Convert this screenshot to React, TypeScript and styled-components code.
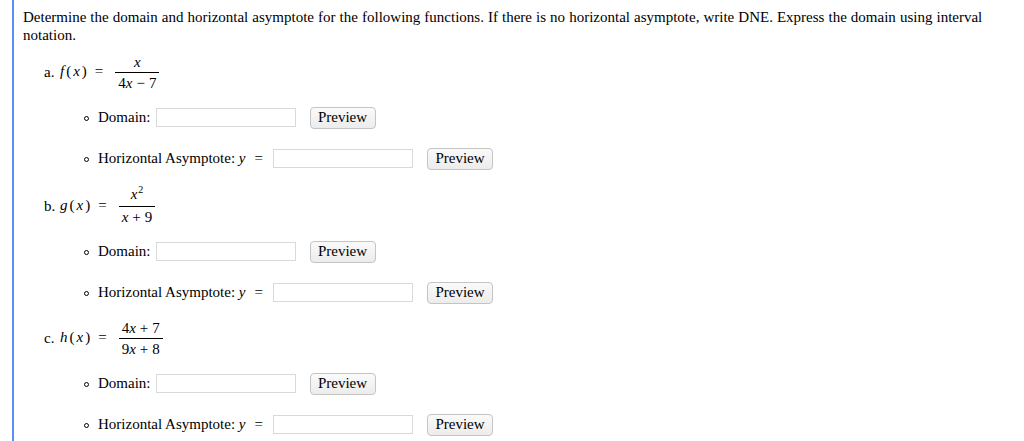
import React from 'react';
import styled, { createGlobalStyle } from 'styled-components';

/* ------------------------------- Global look ------------------------------ */
const serif = `'Liberation Serif', 'Times New Roman', Times, serif`;

const GlobalStyle = createGlobalStyle`
  html, body {
    margin: 0;
    padding: 0;
    background: #fff;
  }
  body {
    font-family: ${serif};
    font-size: 15px;
    color: #000;
  }
`;

/* --------------------------------- Styles --------------------------------- */
const Page = styled.div`
  margin-left: 12px;
  border-left: 2px solid #5a8ef2;
  min-height: 100vh;
  padding: 8px 30px 0 9px;
  box-sizing: border-box;
`;

const Intro = styled.p`
  margin: 0;
  line-height: 18px;
  max-width: 970px;
  word-spacing: 0.3px;
`;

const ProblemList = styled.div`
  display: flex;
  flex-direction: column;
  padding-left: 21px;
  margin-top: 8px;
`;

const ProblemItem = styled.div`
  display: flex;
  flex-direction: column;
  & + & {
    margin-top: 17px;
  }
  &:last-child {
    margin-top: 15px;
  }
`;

const EqRow = styled.div`
  display: flex;
  align-items: center;
  height: 41px;
`;

const Letter = styled.span`
  width: 16px;
  flex: none;
`;

const MathLine = styled.span`
  display: block;
  white-space: nowrap;
  line-height: 41px;
  font-family: ${serif};
`;

const Var = styled.span`
  font-family: ${serif};
  font-style: italic;
`;

const Paren = styled.span`
  padding: 0 2px;
`;

const Op = styled.span`
  padding: 0 4px;
`;

const Sup = styled.span`
  font-size: 10px;
  position: relative;
  top: -6px;
  margin-left: 1px;
`;

const Equals = styled.span<{ $trail?: boolean }>`
  display: inline-block;
  padding: ${(p) => (p.$trail ? '0 0 0 9px' : '0 6px')};
  margin-right: ${(p) => (p.$trail ? '5px' : '0')};
`;

const Fraction = styled.span`
  display: inline-block;
  vertical-align: middle;
  text-align: center;
  line-height: 20px;
  margin-left: 6px;
  position: relative;
  top: -1px;
`;

const Num = styled.span`
  display: block;
  padding: 0 3px;
  border-bottom: 1px solid #000;
`;

const Den = styled.span`
  display: block;
  padding: 0 3px;
`;

const SubList = styled.div`
  display: flex;
  flex-direction: column;
  gap: 20px;
  margin-top: 14px;
  padding-left: 40px;
`;

const SubRow = styled.div`
  display: flex;
  align-items: center;
  height: 21px;
`;

const Bullet = styled.span`
  width: 3px;
  height: 3px;
  border: 1px solid #000;
  border-radius: 50%;
  margin-right: 9px;
  margin-top: 1px;
  flex: none;
`;

const RowLabel = styled.span`
  white-space: pre;
  margin-right: 5px;
`;

const AnswerInput = styled.input`
  width: 140px;
  height: 19px;
  box-sizing: border-box;
  border: 1px solid #d9d9d9;
  background: #fff;
  padding: 0 3px;
  font: inherit;
  outline: none;
`;

const PreviewButton = styled.button`
  margin-left: 14px;
  width: 66px;
  height: 22px;
  box-sizing: border-box;
  border: 1px solid #c4c4c4;
  border-radius: 4px;
  background: linear-gradient(#fafafa, #ececec);
  font-family: ${serif};
  font-size: 15px;
  color: #000;
  padding: 0;
`;

/* ---------------------------------- Data ---------------------------------- */
type Problem = {
  letter: string;
  fn: string;
  num: React.ReactNode;
  den: React.ReactNode;
};

const X = () => <Var>x</Var>;

const problems: Problem[] = [
  {
    letter: 'a.',
    fn: 'f',
    num: <X />,
    den: (
      <>
        4<X />
        <Op>−</Op>7
      </>
    ),
  },
  {
    letter: 'b.',
    fn: 'g',
    num: (
      <>
        <X />
        <Sup>2</Sup>
      </>
    ),
    den: (
      <>
        <X />
        <Op>+</Op>9
      </>
    ),
  },
  {
    letter: 'c.',
    fn: 'h',
    num: (
      <>
        4<X />
        <Op>+</Op>7
      </>
    ),
    den: (
      <>
        9<X />
        <Op>+</Op>8
      </>
    ),
  },
];

/* -------------------------------- Component ------------------------------- */
const App = () => {
  return (
    <Page>
      <GlobalStyle />
      <Intro>
        Determine the domain and horizontal asymptote for the following
        functions. If there is no horizontal asymptote, write DNE. Express the
        domain using interval notation.
      </Intro>

      <ProblemList>
        {problems.map((p) => (
          <ProblemItem key={p.letter}>
            <EqRow>
              <Letter>{p.letter}</Letter>
              <MathLine>
                <Var>{p.fn}</Var>
                <Paren>(</Paren>
                <X />
                <Paren>)</Paren>
                <Equals>=</Equals>
                <Fraction>
                  <Num>{p.num}</Num>
                  <Den>{p.den}</Den>
                </Fraction>
              </MathLine>
            </EqRow>

            <SubList>
              <SubRow>
                <Bullet />
                <RowLabel>Domain:</RowLabel>
                <AnswerInput type="text" />
                <PreviewButton type="button">Preview</PreviewButton>
              </SubRow>
              <SubRow>
                <Bullet />
                <RowLabel>
                  Horizontal Asymptote: <Var>y</Var>
                  <Equals $trail>=</Equals>
                </RowLabel>
                <AnswerInput type="text" />
                <PreviewButton type="button">Preview</PreviewButton>
              </SubRow>
            </SubList>
          </ProblemItem>
        ))}
      </ProblemList>
    </Page>
  );
};

export default App;
